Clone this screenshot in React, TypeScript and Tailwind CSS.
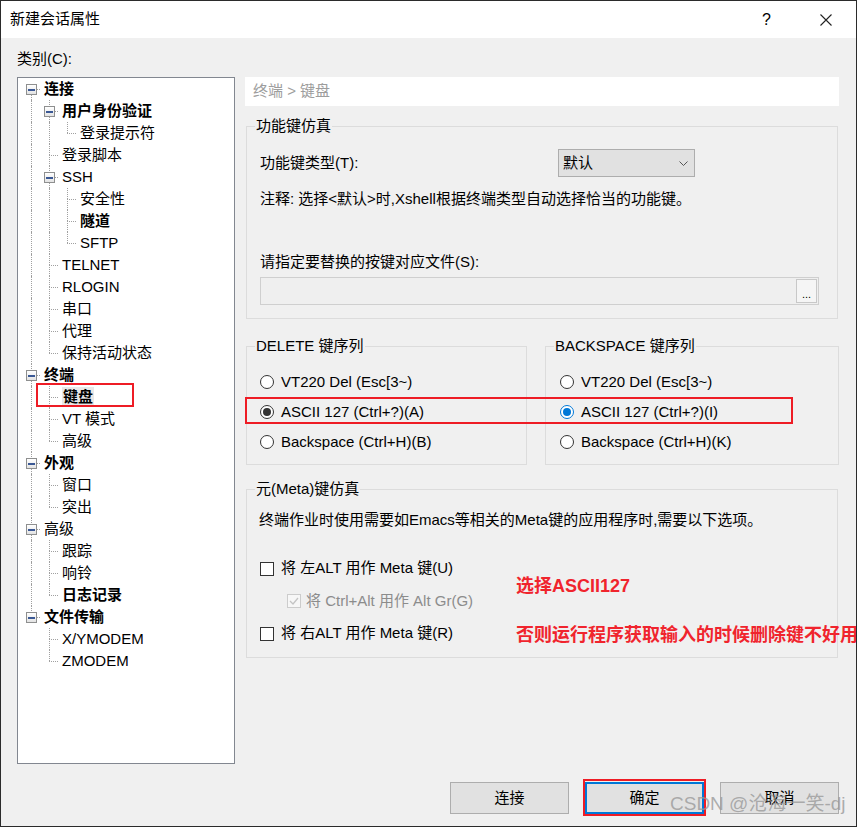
import React from "react";

// Xshell "新建会话属性" dialog, 键盘 page

type Node = { level: number; label: string; bold?: boolean; kids?: boolean; selected?: boolean };

const tree: Node[] = [
  { level: 0, label: "连接", bold: true, kids: true },
  { level: 1, label: "用户身份验证", bold: true, kids: true },
  { level: 2, label: "登录提示符" },
  { level: 1, label: "登录脚本" },
  { level: 1, label: "SSH", kids: true },
  { level: 2, label: "安全性" },
  { level: 2, label: "隧道", bold: true },
  { level: 2, label: "SFTP" },
  { level: 1, label: "TELNET" },
  { level: 1, label: "RLOGIN" },
  { level: 1, label: "串口" },
  { level: 1, label: "代理" },
  { level: 1, label: "保持活动状态" },
  { level: 0, label: "终端", bold: true, kids: true },
  { level: 1, label: "键盘", bold: true, selected: true },
  { level: 1, label: "VT 模式" },
  { level: 1, label: "高级" },
  { level: 0, label: "外观", bold: true, kids: true },
  { level: 1, label: "窗口" },
  { level: 1, label: "突出" },
  { level: 0, label: "高级", kids: true },
  { level: 1, label: "跟踪" },
  { level: 1, label: "响铃" },
  { level: 1, label: "日志记录", bold: true },
  { level: 0, label: "文件传输", bold: true, kids: true },
  { level: 1, label: "X/YMODEM" },
  { level: 1, label: "ZMODEM" },
];

// does a row at `level` appear later, before the branch closes?
function continues(i: number, level: number) {
  for (let j = i + 1; j < tree.length; j++) {
    if (tree[j].level < level) return false;
    if (tree[j].level === level) return true;
  }
  return false;
}

const dots = "border-dotted border-[#a0a0a0]";

function TreeRow({ node, index }: { node: Node; index: number }) {
  const ancestors = Array.from({ length: node.level }, (_, k) => k);
  return (
    <div className="flex h-[22px] items-center">
      {ancestors.map((k) => (
        <div key={k} className="relative h-[22px] w-[18px]">
          {continues(index, k) && <div className={`absolute left-[9px] top-0 bottom-0 border-l ${dots}`} />}
        </div>
      ))}
      <div className="relative h-[22px] w-[18px]">
        {index > 0 && <div className={`absolute left-[9px] top-0 h-[11px] border-l ${dots}`} />}
        {continues(index, node.level) && (
          <div className={`absolute left-[9px] top-[11px] bottom-0 border-l ${dots}`} />
        )}
        <div className={`absolute left-[9px] top-[11px] w-[9px] border-t ${dots}`} />
        {node.kids && (
          <div className="absolute left-[4px] top-[6px] flex h-[11px] w-[11px] items-center justify-center border border-[#8e8f8f] bg-gradient-to-b from-white to-[#e3e3e3]">
            <div className="h-[2px] w-[7px] bg-[#3a5894]" />
          </div>
        )}
      </div>
      <span
        className={`ml-[4px] whitespace-nowrap leading-[20px] ${node.bold ? "font-bold" : ""} ${
          node.selected ? "bg-[#e8e8e8] px-px" : ""
        }`}
      >
        {node.label}
      </span>
    </div>
  );
}

function Radio({ checked, blue }: { checked?: boolean; blue?: boolean }) {
  const ring = blue && checked ? "border-[#0078d7]" : "border-[#333]";
  return (
    <span className={`flex h-[14px] w-[14px] shrink-0 items-center justify-center rounded-full border bg-white ${ring}`}>
      {checked && <span className={`h-[8px] w-[8px] rounded-full ${blue ? "bg-[#0078d7]" : "bg-[#333]"}`} />}
    </span>
  );
}

function RadioRow({ label, checked, blue }: { label: string; checked?: boolean; blue?: boolean }) {
  return (
    <div className="flex h-[30px] items-center gap-[7px]">
      <Radio checked={checked} blue={blue} />
      <span className="whitespace-nowrap">{label}</span>
    </div>
  );
}

function Check({ disabled }: { disabled?: boolean }) {
  if (disabled)
    return (
      <span className="flex h-[14px] w-[14px] shrink-0 items-center justify-center border border-[#cccccc] bg-[#f7f7f7]">
        <svg width="10" height="8" viewBox="0 0 10 8">
          <path d="M1 4 L4 7 L9 1" fill="none" stroke="#c4c4c4" strokeWidth="1.3" />
        </svg>
      </span>
    );
  return <span className="h-[14px] w-[14px] shrink-0 border border-[#333] bg-white" />;
}

function Btn({ label, primary }: { label: string; primary?: boolean }) {
  return (
    <div
      className={`flex h-[32px] w-[119px] items-center justify-center bg-[#e1e1e1] ${
        primary ? "border-2 border-[#0078d7]" : "border border-[#adadad]"
      }`}
    >
      {label}
    </div>
  );
}

export default function App() {
  return (
    <div className="relative flex h-[827px] w-[857px] flex-col overflow-hidden border border-[#2b2b2b] font-['Liberation_Sans','Noto_Sans_CJK_SC',sans-serif] text-[15px] text-black">
      {/* Title bar */}
      <div className="flex h-[37px] shrink-0 items-center bg-white pl-[9px] pr-[24px]">
        <span className="flex-1">新建会话属性</span>
        <span className="mr-[49px] text-[16px]">?</span>
        <svg width="12" height="12" viewBox="0 0 12 12">
          <path d="M0.5 0.5 L11.5 11.5 M11.5 0.5 L0.5 11.5" stroke="#222" strokeWidth="1.1" />
        </svg>
      </div>

      <div className="flex flex-1 flex-col bg-[#f0f0f0] px-[16px] pt-[11px]">
        <div className="leading-[20px]">类别(C):</div>

        <div className="mt-[8px] flex gap-[10px]">
          {/* Category tree */}
          <div className="relative h-[687px] w-[218px] shrink-0 border border-[#828790] bg-white pl-[4px]">
            {tree.map((n, i) => (
              <TreeRow key={i} node={n} index={i} />
            ))}
            <div className="absolute left-[18px] top-[305px] h-[24px] w-[98px] border-2 border-[#ee1c25]" />
          </div>

          {/* Right page */}
          <div className="relative flex w-[594px] flex-col">
            <div className="flex h-[29px] items-center bg-white px-[8px] text-[#9d9d9d]">终端 &gt; 键盘</div>

            <fieldset className="mx-px mt-[10px] border border-[#dcdcdc] pb-[13px] pl-[13px] pr-[18px]">
              <legend className="-ml-[5px] px-px leading-[20px]">功能键仿真</legend>
              <div className="mt-[13px] flex h-[28px] items-center">
                <span className="w-[298px]">功能键类型(T):</span>
                <div className="flex h-[28px] w-[137px] items-center justify-between border border-[#adadad] bg-[#e1e1e1] pl-[4px] pr-[6px]">
                  <span>默认</span>
                  <svg width="9" height="5" viewBox="0 0 9 5">
                    <path d="M0.5 0.5 L4.5 4.5 L8.5 0.5" fill="none" stroke="#555" strokeWidth="1" />
                  </svg>
                </div>
              </div>
              <div className="mt-[12px] leading-[20px] whitespace-nowrap">
                注释: 选择&lt;默认&gt;时,Xshell根据终端类型自动选择恰当的功能键。
              </div>
              <div className="mt-[43px] leading-[20px]">请指定要替换的按键对应文件(S):</div>
              <div className="mt-[5px] flex h-[28px] justify-end border border-[#cfcfcf] bg-[#efefef] p-px">
                <div className="flex w-[21px] items-end justify-center border border-[#c8c8c8] bg-[#f5f5f5] pb-[2px] text-[11px] leading-[12px]">
                  ...
                </div>
              </div>
            </fieldset>

            <div className="mt-[17px] flex gap-[18px]">
              <fieldset className="ml-px w-[281px] border border-[#dcdcdc] pb-[7px] pl-[13px] pt-[11px]">
                <legend className="-ml-[5px] px-px leading-[20px]">DELETE 键序列</legend>
                <RadioRow label="VT220 Del (Esc[3~)" />
                <RadioRow label="ASCII 127 (Ctrl+?)(A)" checked />
                <RadioRow label="Backspace (Ctrl+H)(B)" />
              </fieldset>
              <fieldset className="w-[294px] border border-[#dcdcdc] pb-[7px] pl-[14px] pt-[11px]">
                <legend className="-ml-[6px] px-px leading-[20px]">BACKSPACE 键序列</legend>
                <RadioRow label="VT220 Del (Esc[3~)" />
                <RadioRow label="ASCII 127 (Ctrl+?)(I)" checked blue />
                <RadioRow label="Backspace (Ctrl+H)(K)" />
              </fieldset>
            </div>

            <fieldset className="relative mx-px mt-[14px] border border-[#dcdcdc] pb-[7px] pl-[13px] pt-[11px]">
              <legend className="-ml-[5px] px-px leading-[20px]">元(Meta)键仿真</legend>
              <div className="-ml-px leading-[20px] whitespace-nowrap">
                终端作业时使用需要如Emacs等相关的Meta键的应用程序时,需要以下选项。
              </div>
              <div className="mt-[22px] flex h-[33px] items-center gap-[7px]">
                <Check />
                <span>将 左ALT 用作 Meta 键(U)</span>
              </div>
              <div className="flex h-[32px] items-center gap-[5px] pl-[27px] text-[#8c8c8c]">
                <Check disabled />
                <span>将 Ctrl+Alt 用作 Alt Gr(G)</span>
              </div>
              <div className="flex h-[33px] items-center gap-[7px]">
                <Check />
                <span>将 右ALT 用作 Meta 键(R)</span>
              </div>

              <div className="absolute left-[269px] top-[75px] whitespace-nowrap text-[18px] font-bold leading-[24px] text-[#f0242d]">
                选择ASCII127
              </div>
              <div className="absolute left-[269px] top-[124px] whitespace-nowrap text-[18px] font-bold leading-[24px] text-[#f0242d]">
                否则运行程序获取输入的时候删除键不好用
              </div>
            </fieldset>

            {/* annotation box around ASCII 127 rows */}
            <div className="absolute left-0 top-[320px] h-[27px] w-[548px] border-2 border-[#ee1c25]" />
          </div>
        </div>

        {/* Dialog buttons */}
        <div className="mt-[18px] flex justify-end gap-[16px] pr-px">
          <Btn label="连接" />
          <div className="relative">
            <Btn label="确定" primary />
            <div className="absolute -left-[2px] -top-[3px] h-[37px] w-[123px] border-2 border-[#ee1c25]" />
          </div>
          <Btn label="取消" />
        </div>
      </div>

      {/* CSDN watermark */}
      <div className="absolute left-[669px] top-[791px] whitespace-nowrap text-[19px] leading-[24px] text-[#9a9a9a]/80">
        CSDN @沧海一笑-dj
      </div>
    </div>
  );
}
